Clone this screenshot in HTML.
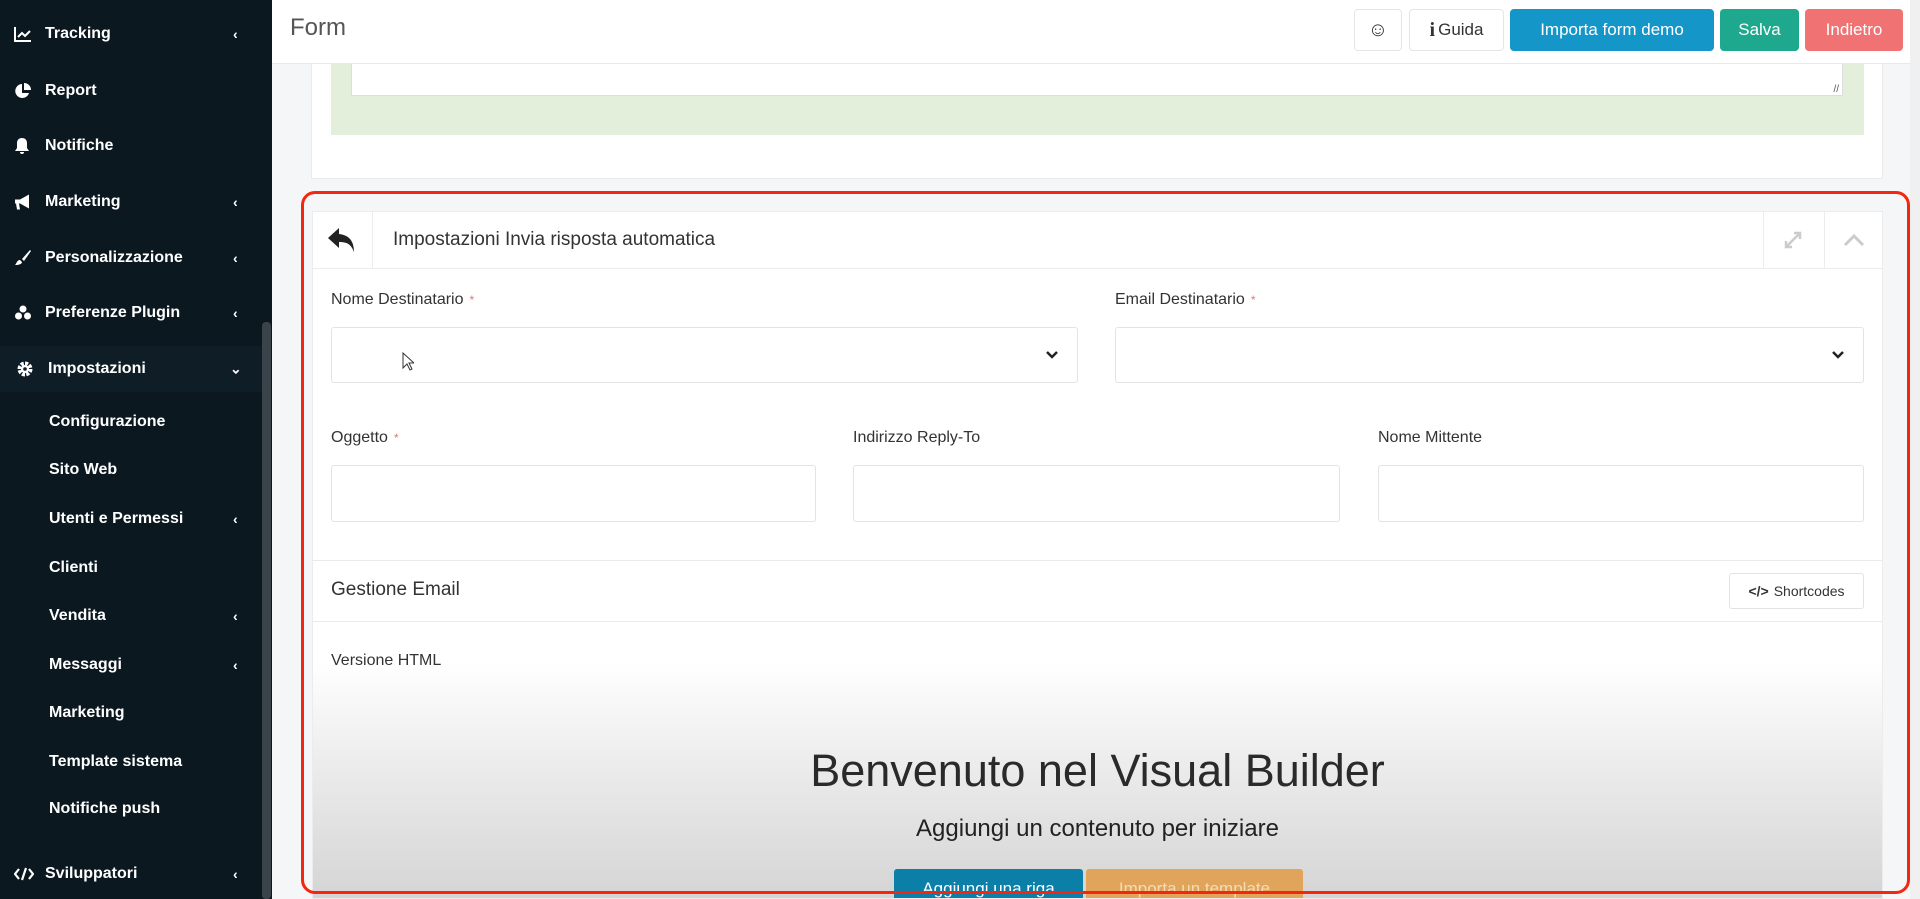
<!DOCTYPE html>
<html><head><meta charset="utf-8"><style>
*{box-sizing:border-box;margin:0;padding:0}
html,body{width:1920px;height:899px;overflow:hidden}
body{background:#f5f6f7;font-family:"Liberation Sans",sans-serif;position:relative;color:#333}
.sb{position:absolute;left:0;top:0;width:272px;height:899px;background:#0c1820}
.sb .it{position:absolute;left:45px;color:#fff;font-weight:bold;font-size:16px;transform:translateY(-50%)}
.sb .sub{left:49px;font-size:16px}
.sb svg.ic{position:absolute;left:14px;transform:translateY(-50%)}
.sb .ch{position:absolute;left:233px;color:#fff;font-size:14px;font-weight:bold;transform:translateY(-50%)}
.abs{position:absolute}
.hdr{position:absolute;left:272px;top:0;width:1638px;height:64px;background:#fff;border-bottom:1px solid #e8e8e8}
.btn{position:absolute;top:9px;height:42px;border-radius:4px;color:#fff;font-size:17px;display:flex;align-items:center;justify-content:center}
.lbl{position:absolute;font-size:16px;color:#333}
.lbl b{color:#e57373;font-weight:normal;font-size:12px;margin-left:6px}
.inp{position:absolute;background:#fff;border:1px solid #e3e3e3;border-radius:3px}
</style></head><body>
<div class="sb">
<svg class="ic" style="top:34px" width="18" height="16" viewBox="0 0 18 16" fill="none" stroke="#fff" stroke-width="2"><path d="M1 1v14h16M4 11l4-4 3 3 5-5"/></svg><div class="it" style="top:34px">Tracking</div><div class="ch" style="top:34px">‹</div>
<svg class="ic" style="top:91px" width="18" height="18" viewBox="0 0 18 18"><path d="M8 2a7 7 0 1 0 7 9H8z" fill="#fff"/><path d="M10 1v7h7a7 7 0 0 0-7-7z" fill="#fff"/></svg><div class="it" style="top:91px">Report</div>
<svg class="ic" style="top:146px" width="16" height="18" viewBox="0 0 16 18"><path d="M8 1c-3 0-5 2-5 5v5l-2 3h14l-2-3V6c0-3-2-5-5-5zM6 15a2 2 0 0 0 4 0z" fill="#fff"/></svg><div class="it" style="top:146px">Notifiche</div>
<svg class="ic" style="top:202px" width="19" height="17" viewBox="0 0 19 17"><path d="M1 6h5l9-5v14l-9-5H5l1 6H3l-1-6H1z" fill="#fff"/></svg><div class="it" style="top:202px">Marketing</div><div class="ch" style="top:202px">‹</div>
<svg class="ic" style="top:258px" width="18" height="18" viewBox="0 0 18 18"><path d="M16 1L8 10l2 2 7-10zM6 11c-3 0-3 3-5 5 4 0 7-1 7-3z" fill="#fff"/></svg><div class="it" style="top:258px">Personalizzazione</div><div class="ch" style="top:258px">‹</div>
<svg class="ic" style="top:313px" width="18" height="16" viewBox="0 0 18 16" fill="#fff"><circle cx="9" cy="4" r="3.5"/><circle cx="4.5" cy="11" r="3.5"/><circle cx="13.5" cy="11" r="3.5"/></svg><div class="it" style="top:313px">Preferenze Plugin</div><div class="ch" style="top:313px">‹</div>
<div style="position:absolute;left:0;top:346px;width:262px;height:46px;background:#0f1d26"></div>
<svg class="ic" style="top:369px;left:17px" width="16" height="16" viewBox="0 0 16 16"><circle cx="8" cy="8" r="5.5" fill="none" stroke="#fff" stroke-width="4" stroke-dasharray="3 1.3"/><circle cx="8" cy="8" r="4" fill="#fff"/><circle cx="8" cy="8" r="1.8" fill="#0f1d26"/></svg><div class="it" style="top:369px;left:48px">Impostazioni</div><div class="ch" style="top:369px;left:230px">⌄</div>
<div class="it sub" style="top:422px">Configurazione</div>
<div class="it sub" style="top:470px">Sito Web</div>
<div class="it sub" style="top:519px">Utenti e Permessi</div><div class="ch" style="top:519px">‹</div>
<div class="it sub" style="top:568px">Clienti</div>
<div class="it sub" style="top:616px">Vendita</div><div class="ch" style="top:616px">‹</div>
<div class="it sub" style="top:665px">Messaggi</div><div class="ch" style="top:665px">‹</div>
<div class="it sub" style="top:713px">Marketing</div>
<div class="it sub" style="top:762px">Template sistema</div>
<div class="it sub" style="top:809px">Notifiche push</div>
<svg class="ic" style="top:874px" width="20" height="14" viewBox="0 0 20 14" fill="none" stroke="#fff" stroke-width="2.2"><path d="M5 2L1 7l4 5M15 2l4 5-4 5M12 1L8 13"/></svg><div class="it" style="top:874px">Sviluppatori</div><div class="ch" style="top:874px">‹</div>
<div style="position:absolute;left:262px;top:322px;width:9px;height:577px;background:#3a4349;border-radius:4px"></div>
</div>
<div class="hdr"><div class="abs" style="left:18px;top:14px;font-size:24px;color:#555">Form</div></div>
<div class="btn" style="left:1354px;width:48px;background:#fff;border:1px solid #e5e5e5;color:#333;font-size:20px">☺</div>
<div class="btn" style="left:1409px;width:95px;background:#fff;border:1px solid #e5e5e5;color:#333"><b style="font-family:'Liberation Serif';font-size:20px;margin-right:3px">i</b>Guida</div>
<div class="btn" style="left:1510px;width:204px;background:#1596c8">Importa form demo</div>
<div class="btn" style="left:1720px;width:79px;background:#1ea88e">Salva</div>
<div class="btn" style="left:1805px;width:98px;background:#f07272">Indietro</div>
<div class="abs" style="left:1910px;top:0;width:10px;height:899px;background:#f0f0f0"></div>
<div class="abs" style="left:311px;top:64px;width:1572px;height:115px;background:#fff;border:1px solid #eaeaea;border-top:none"></div>
<div class="abs" style="left:331px;top:64px;width:1533px;height:71px;background:#e3eedb"></div>
<div class="abs" style="left:351px;top:64px;width:1492px;height:32px;background:#fff;border:1px solid #ddd;border-top:none"><span style="position:absolute;right:3px;bottom:0;font-size:10px;color:#555">//</span></div>
<div class="abs" style="left:312px;top:211px;width:1571px;height:688px;background:linear-gradient(#fff 0,#fff 450px,#f0f0f0 530px,#d4d4d4 688px);border:1px solid #ececec;overflow:hidden">
<div class="abs" style="left:581px;top:657px;width:189px;height:40px;background:#0c7fa8;border-radius:3px;color:#fff;font-size:17px;text-align:center;padding-top:10px">Aggiungi una riga</div>
<div class="abs" style="left:773px;top:657px;width:217px;height:40px;background:#e0a45a;border-radius:3px;color:#f4dcb8;font-size:17px;text-align:center;padding-top:10px">Importa un template</div>
</div>
<div class="abs" style="left:312px;top:211px;width:1571px;height:58px;border-bottom:1px solid #ececec"></div>
<div class="abs" style="left:372px;top:211px;width:1px;height:58px;background:#ececec"></div>
<div class="abs" style="left:1763px;top:211px;width:1px;height:58px;background:#ececec"></div>
<div class="abs" style="left:1824px;top:211px;width:1px;height:58px;background:#ececec"></div>
<svg class="abs" style="left:326px;top:226px" width="32" height="28" viewBox="0 0 32 28"><path d="M13 2 L2 12 L13 22 L13 16 C21 16 25 18 28 26 C28 15 23 9 13 8 Z" fill="#222"/></svg>
<div class="abs" style="left:393px;top:229px;font-size:19px;color:#333">Impostazioni Invia risposta automatica</div>
<svg class="abs" style="left:1782px;top:229px" width="22" height="22" viewBox="0 0 22 22" stroke="#ccc" stroke-width="2.5" fill="none"><path d="M4 18 L18 4 M12 4h6v6 M4 12v6h6"/></svg>
<svg class="abs" style="left:1843px;top:233px" width="22" height="14" viewBox="0 0 22 14" stroke="#ccc" stroke-width="3" fill="none"><path d="M2 12 L11 3 L20 12"/></svg>
<div class="lbl" style="left:331px;top:291px">Nome Destinatario<b>*</b></div>
<div class="inp" style="left:331px;top:327px;width:747px;height:56px"><svg style="position:absolute;right:18px;top:22px" width="14" height="10" viewBox="0 0 14 10" stroke="#222" stroke-width="2.5" fill="none"><path d="M2 2l5 5 5-5"/></svg></div>
<svg class="abs" style="left:402px;top:352px" width="12" height="20" viewBox="0 0 12 20"><path d="M1 1v15l4-4 3 6 2-1-3-6h5z" fill="#fff" stroke="#333"/></svg>
<div class="lbl" style="left:1115px;top:291px">Email Destinatario<b>*</b></div>
<div class="inp" style="left:1115px;top:327px;width:749px;height:56px"><svg style="position:absolute;right:18px;top:22px" width="14" height="10" viewBox="0 0 14 10" stroke="#222" stroke-width="2.5" fill="none"><path d="M2 2l5 5 5-5"/></svg></div>
<div class="lbl" style="left:331px;top:429px">Oggetto<b>*</b></div>
<div class="lbl" style="left:853px;top:429px">Indirizzo Reply-To</div>
<div class="lbl" style="left:1378px;top:429px">Nome Mittente</div>
<div class="inp" style="left:331px;top:465px;width:485px;height:57px"></div>
<div class="inp" style="left:853px;top:465px;width:487px;height:57px"></div>
<div class="inp" style="left:1378px;top:465px;width:486px;height:57px"></div>
<div class="abs" style="left:312px;top:560px;width:1571px;height:62px;border-top:1px solid #ebebeb;border-bottom:1px solid #ebebeb"></div>
<div class="abs" style="left:331px;top:579px;font-size:19px;color:#333">Gestione Email</div>
<div class="abs" style="left:1729px;top:573px;width:135px;height:36px;border:1px solid #e3e3e3;border-radius:3px;background:#fff;font-size:14px;display:flex;align-items:center;justify-content:center;color:#333"><b style="margin-right:5px">&lt;/&gt;</b>Shortcodes</div>
<div class="abs" style="left:331px;top:652px;font-size:16px;color:#333">Versione HTML</div>
<div class="abs" style="left:312px;top:745px;width:1571px;text-align:center;font-size:45px;color:#2a2a2a">Benvenuto nel Visual Builder</div>
<div class="abs" style="left:312px;top:815px;width:1571px;text-align:center;font-size:24px;color:#222">Aggiungi un contenuto per iniziare</div>
<div class="abs" style="left:301px;top:191px;width:1609px;height:703px;border:3px solid #f4260f;border-radius:14px"></div>
</body></html>
